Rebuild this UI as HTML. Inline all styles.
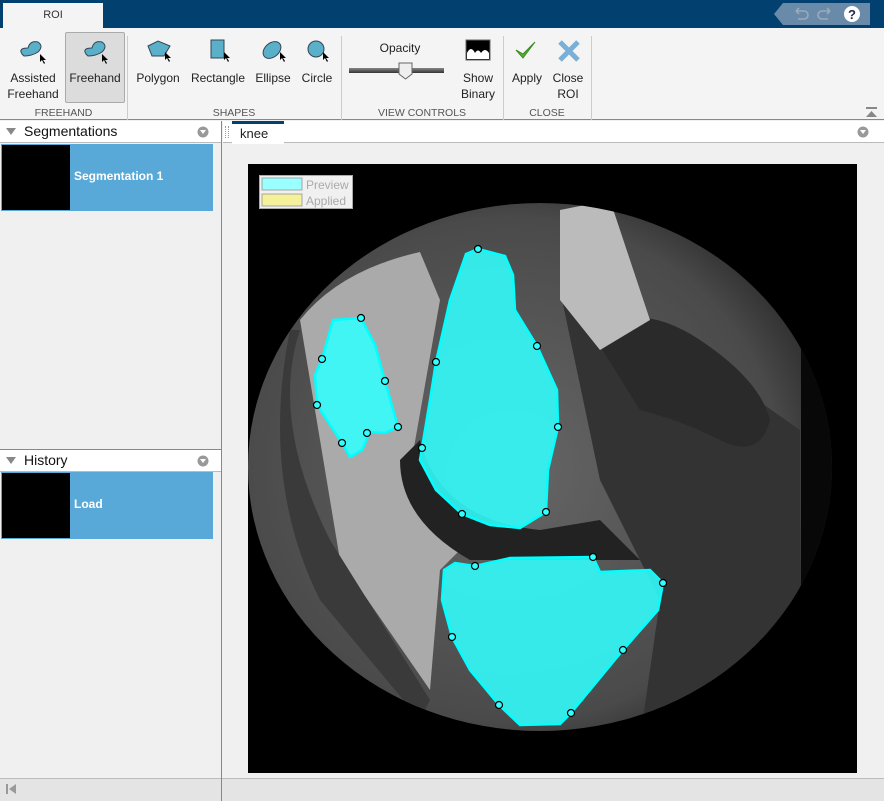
<!DOCTYPE html>
<html><head><meta charset="utf-8"><style>
*{margin:0;padding:0;box-sizing:border-box}
body{width:884px;height:801px;overflow:hidden;background:#f0f0f0;font-family:"Liberation Sans",sans-serif;font-size:12px;color:#222;position:relative}
.abs{position:absolute}
.top{left:0;top:0;width:884px;height:28px;background:#02406f}
.tab{left:3px;top:3px;width:100px;height:25px;background:#f4f4f4;text-align:center;line-height:25px;font-size:11px;color:#333}
.ribbon{left:0;top:28px;width:884px;height:92px;background:#f4f4f4;border-bottom:1px solid #888}
.lbl{text-align:center;font-size:12px;color:#222;line-height:16px}
.sec{font-size:10.5px;color:#555;text-align:center;top:107px}
.sep{top:36px;width:1px;height:84px;background:#ccc}
.lp{left:0;top:121px;width:222px;height:657px;background:#f0f0f0;border-right:1px solid #888}
.hdr{height:22px;background:#fff;border-bottom:1px solid #bbb;font-size:14px;line-height:21px;padding-left:24px;color:#111}
.row{background:#58a8d8;color:#fff;font-weight:bold;font-size:12px}
</style></head><body>
<div class="abs top"></div>
<div class="abs tab">ROI</div>
<svg class="abs" style="left:774px;top:3px" width="96" height="22"><polygon points="9,0 96,0 96,22 9,22 0,11" fill="#6a8aaa"/>
<path d="M22 8 h8 a4 4 0 0 1 0 8 h-6 M22 8 l3-3 M22 8 l3 3" stroke="#9ab" stroke-width="1.6" fill="none"/>
<path d="M56 8 h-8 a4 4 0 0 0 0 8 h6 M56 8 l-3-3 M56 8 l-3 3" stroke="#9ab" stroke-width="1.6" fill="none"/>
<circle cx="78" cy="11" r="8" fill="#fff"/><text x="78" y="16" font-size="13" font-weight="bold" text-anchor="middle" fill="#1a2a4a" font-family="Liberation Sans">?</text></svg>
<div class="abs ribbon"></div>
<div class="abs" style="left:65px;top:32px;width:60px;height:71px;background:#dcdcdc;border:1px solid #aaa;border-radius:2px"></div>
<svg class="abs" style="left:0;top:36px" width="600" height="30">
<g fill="#5ab0c8" stroke="#345" stroke-width="1">
<path d="M22 18 q-4-6 6-6 q2-8 10-6 q6 4 0 10 q-6 4-14 4z"/>
<path d="M86 18 q-4-6 6-6 q2-8 10-6 q6 4 0 10 q-6 4-14 4z"/>
<polygon points="148,10 158,5 170,10 164,20 152,20"/>
<rect x="211" y="4" width="13" height="18"/>
<ellipse cx="272" cy="14" rx="10" ry="7" transform="rotate(-40 272 14)"/>
<circle cx="316" cy="13" r="8"/>
</g>
<g fill="#000"><path d="M40 18l0 8 2-2 2 4 1-1-2-3 3 0z"/><path d="M102 18l0 8 2-2 2 4 1-1-2-3 3 0z"/><path d="M165 16l0 8 2-2 2 4 1-1-2-3 3 0z"/><path d="M224 16l0 8 2-2 2 4 1-1-2-3 3 0z"/><path d="M280 16l0 8 2-2 2 4 1-1-2-3 3 0z"/><path d="M323 16l0 8 2-2 2 4 1-1-2-3 3 0z"/></g>
<rect x="466" y="4" width="24" height="20" fill="#000" stroke="#666"/><path d="M467 23 v-6 q4-8 8 0 q3-5 6 0 q4-6 8 0 v6z" fill="#fff"/>
<path d="M516 14 l7 8 l12-16 l-12 12z" fill="#5cb030" stroke="#3a8a20"/>
<path d="M560 6 l18 18 M578 6 l-18 18" stroke="#7ab0d8" stroke-width="5"/>
</svg>
<div class="abs lbl" style="left:2px;top:70px;width:62px">Assisted<br>Freehand</div>
<div class="abs lbl" style="left:65px;top:70px;width:60px">Freehand</div>
<div class="abs lbl" style="left:133px;top:70px;width:50px">Polygon</div>
<div class="abs lbl" style="left:188px;top:70px;width:60px">Rectangle</div>
<div class="abs lbl" style="left:250px;top:70px;width:46px">Ellipse</div>
<div class="abs lbl" style="left:296px;top:70px;width:42px">Circle</div>
<div class="abs lbl" style="left:360px;top:40px;width:80px">Opacity</div>
<div class="abs" style="left:349px;top:68px;width:95px;height:5px;background:linear-gradient(#888,#333)"></div>
<svg class="abs" style="left:398px;top:62px" width="16" height="18"><path d="M1 1h13v11l-6.5 5l-6.5-5z" fill="#eee" stroke="#666"/></svg>
<div class="abs lbl" style="left:455px;top:70px;width:46px">Show<br>Binary</div>
<div class="abs lbl" style="left:507px;top:70px;width:40px">Apply</div>
<div class="abs lbl" style="left:548px;top:70px;width:40px">Close<br>ROI</div>
<div class="abs sec" style="left:0;width:127px">FREEHAND</div>
<div class="abs sec" style="left:127px;width:214px">SHAPES</div>
<div class="abs sec" style="left:341px;width:162px">VIEW CONTROLS</div>
<div class="abs sec" style="left:503px;width:88px">CLOSE</div>
<div class="abs sep" style="left:127px"></div><div class="abs sep" style="left:341px"></div><div class="abs sep" style="left:503px"></div><div class="abs sep" style="left:591px"></div>
<svg class="abs" style="left:865px;top:106px" width="14" height="12"><rect x="1" y="1" width="11" height="2" fill="#888"/><polygon points="1,11 6.5,5 12,11" fill="#888"/></svg>

<div class="abs lp"></div>
<div class="abs hdr" style="left:0;top:121px;width:221px">Segmentations</div>
<svg class="abs" style="left:6px;top:128px" width="10" height="8"><polygon points="0,0 10,0 5,7" fill="#888"/></svg>
<svg class="abs" style="left:197px;top:126px" width="12" height="12"><circle cx="6" cy="6" r="5.5" fill="#999"/><polygon points="3,4 9,4 6,8" fill="#fff"/></svg>
<div class="abs row" style="left:1px;top:144px;width:212px;height:67px"><div style="position:absolute;left:1px;top:1px;width:68px;height:65px;background:#000"></div><div style="position:absolute;left:73px;top:25px">Segmentation 1</div></div>
<div class="abs" style="left:0;top:449px;width:221px;height:1px;background:#888"></div>
<div class="abs hdr" style="left:0;top:450px;width:221px">History</div>
<svg class="abs" style="left:6px;top:457px" width="10" height="8"><polygon points="0,0 10,0 5,7" fill="#888"/></svg>
<svg class="abs" style="left:197px;top:455px" width="12" height="12"><circle cx="6" cy="6" r="5.5" fill="#999"/><polygon points="3,4 9,4 6,8" fill="#fff"/></svg>
<div class="abs row" style="left:1px;top:472px;width:212px;height:67px"><div style="position:absolute;left:1px;top:1px;width:68px;height:65px;background:#000"></div><div style="position:absolute;left:73px;top:25px">Load</div></div>

<div class="abs" style="left:223px;top:121px;width:661px;height:22px;background:#fff;border-bottom:1px solid #bbb"></div>
<div class="abs" style="left:232px;top:121px;width:52px;height:23px;background:#fff;border-top:3px solid #02406f;font-size:13px;line-height:19px;padding-left:8px">knee</div>
<div class="abs" style="left:225px;top:126px;width:4px;height:12px;border-left:1px dotted #999;border-right:1px dotted #999"></div>
<svg class="abs" style="left:857px;top:126px" width="12" height="12"><circle cx="6" cy="6" r="5.5" fill="#999"/><polygon points="3,4 9,4 6,8" fill="#fff"/></svg>

<div class="abs" style="left:0;top:778px;width:884px;height:23px;background:#e4e4e4;border-top:1px solid #bbb"></div>
<div class="abs" style="left:221px;top:778px;width:1px;height:23px;background:#888"></div>
<svg class="abs" style="left:6px;top:783px" width="12" height="12"><rect x="0" y="1" width="2" height="10" fill="#999"/><polygon points="10,1 10,11 3,6" fill="#999"/></svg>

<svg class="abs" style="left:248px;top:164px" width="609" height="609" viewBox="248 164 609 609">
<defs><radialGradient id="g" cx="0.45" cy="0.5" r="0.6"><stop offset="0" stop-color="#666"/><stop offset="0.75" stop-color="#4a4a4a"/><stop offset="1" stop-color="#1e1e1e"/></radialGradient>
<clipPath id="c"><ellipse cx="540" cy="467" rx="292" ry="264"/></clipPath></defs>
<rect x="248" y="164" width="609" height="609" fill="#000"/>
<g clip-path="url(#c)">
<rect x="240" y="190" width="600" height="560" fill="url(#g)"/>
<rect x="801" y="300" width="60" height="450" fill="#080808"/>
<path d="M560 290 Q640 300 700 360 L800 430 L800 740 L640 740 L660 600 L600 480 Z" fill="#333"/>
<path d="M590 330 Q640 300 700 340 Q760 380 770 420 Q760 460 720 440 Q680 420 640 410 Z" fill="#2a2a2a"/>
<path d="M560 210 L610 200 L650 320 L600 350 L560 300Z" fill="#bbb"/>
<path d="M300 320 Q340 270 420 252 L440 300 L410 470 L470 540 L440 570 L430 690 L340 560 Z" fill="#aaa"/>
<path d="M300 330 Q270 420 330 540 L430 700 L420 720 L320 600 Q260 480 290 330Z" fill="#3a3a3a"/>
<path d="M420 440 Q440 520 540 530 L600 520 L640 560 L470 560 Q400 520 400 460Z" fill="#222"/>
</g>
<g fill="#3ff" fill-opacity="0.88" stroke="#0ff" stroke-width="2.5">
<path d="M333 320 L361 318 L375 345 L385 381 L398 427 L385 433 L370 432 L362 450 L350 457 L342 443 L317 405 L315 375 L322 359 Z"/>
<path d="M466 254 L478 249 L505 256 L513 275 L515 310 L537 346 L557 390 L558 427 L548 470 L546 512 L520 528 L490 525 L462 514 L436 490 L420 460 L422 448 L430 400 L436 362 L450 300 Z"/>
<path d="M444 570 L455 563 L475 566 L510 558 L593 557 L600 572 L650 570 L663 583 L658 610 L623 650 L590 690 L571 713 L560 724 L520 725 L499 705 L470 670 L452 637 L442 600 Z"/>
</g>
<g fill="#3ff" stroke="#000" stroke-width="1.2">
<circle cx="361" cy="318" r="3.5"/><circle cx="322" cy="359" r="3.5"/><circle cx="385" cy="381" r="3.5"/><circle cx="317" cy="405" r="3.5"/><circle cx="398" cy="427" r="3.5"/><circle cx="367" cy="433" r="3.5"/><circle cx="342" cy="443" r="3.5"/>
<circle cx="478" cy="249" r="3.5"/><circle cx="537" cy="346" r="3.5"/><circle cx="436" cy="362" r="3.5"/><circle cx="558" cy="427" r="3.5"/><circle cx="422" cy="448" r="3.5"/><circle cx="546" cy="512" r="3.5"/><circle cx="462" cy="514" r="3.5"/>
<circle cx="475" cy="566" r="3.5"/><circle cx="593" cy="557" r="3.5"/><circle cx="663" cy="583" r="3.5"/><circle cx="452" cy="637" r="3.5"/><circle cx="623" cy="650" r="3.5"/><circle cx="499" cy="705" r="3.5"/><circle cx="571" cy="713" r="3.5"/>
</g>
<rect x="259.5" y="175.5" width="93" height="33" fill="#f0f0f0" stroke="#aaa"/>
<rect x="262" y="178" width="40" height="12" fill="#9ff" stroke="#888" stroke-width="0.7"/>
<rect x="262" y="194" width="40" height="12" fill="#f5f09a" stroke="#888" stroke-width="0.7"/>
<text x="306" y="189" font-size="12" fill="#aaa" font-family="Liberation Sans">Preview</text>
<text x="306" y="205" font-size="12" fill="#aaa" font-family="Liberation Sans">Applied</text>
</svg>
</body></html>
